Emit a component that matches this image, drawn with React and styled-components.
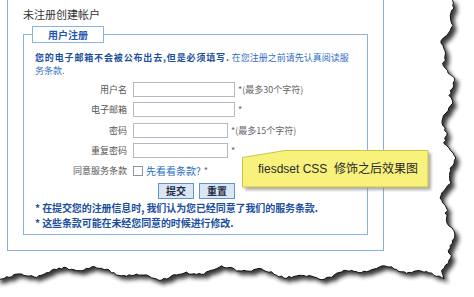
import React from 'react';
import styled, { createGlobalStyle } from 'styled-components';

const GlobalStyle = createGlobalStyle`
  html, body {
    margin: 0;
    padding: 0;
    background: #ffffff;
  }
  body {
    width: 474px;
    height: 297px;
    overflow: hidden;
    font-family: "Noto Sans CJK SC", "Liberation Sans", sans-serif;
  }
`;

const Page = styled.div`
  position: relative;
  width: 474px;
  height: 297px;
  overflow: hidden;
`;

const OuterBox = styled.div`
  margin-left: 7px;
  width: 377px;
  box-sizing: border-box;
  border: 1px solid #86afdf;
  border-top: none;
  padding: 7px 15px 15px 15px;
`;

const Title = styled.div`
  font-size: 11px;
  line-height: 14px;
  color: #333;
  margin-bottom: 5px;
`;

const FieldSet = styled.fieldset`
  margin: 0;
  width: 345px;
  box-sizing: border-box;
  border: 1px solid #86b3e3;
  padding: 0 10px 4px 11px;
`;

const Legend = styled.legend`
  margin-left: -3px;
  width: 72px;
  height: 17px;
  box-sizing: border-box;
  padding: 0;
  border: 1px solid #86b3e3;
  display: flex;
  align-items: center;
  justify-content: center;
  font-size: 10px;
  line-height: 15px;
  font-weight: bold;
  color: #1c56b0;
`;

const Intro = styled.p`
  margin: 8px 0 0 0;
  width: 318px;
  font-size: 9px;
  line-height: 13px;
  color: #2f6dc4;
`;

const Strong = styled.b`
  color: #1b4f9e;
  letter-spacing: 0.85px;
`;

const FormGrid = styled.div`
  margin-top: 5px;
  display: grid;
  grid-template-columns: 92px 1fr;
  grid-auto-rows: 15px;
  column-gap: 6px;
  row-gap: 5.3px;
`;

const Label = styled.label`
  text-align: right;
  font-size: 9px;
  line-height: 15px;
  color: #555;
  white-space: nowrap;
`;

const Cell = styled.div`
  display: flex;
  align-items: center;
  gap: ${(p) => p.$gap || 3}px;
  justify-content: ${(p) => p.$justify || 'flex-start'};
  width: ${(p) => (p.$width ? p.$width + 'px' : 'auto')};
`;

const TextInput = styled.input`
  width: ${(p) => p.$w}px;
  height: 15px;
  box-sizing: border-box;
  margin: 0;
  padding: 0 2px;
  border: 1px solid #b3bac6;
  background: #fff;
  font-size: 9px;
`;

const Hint = styled.span`
  font-size: 9px;
  line-height: 15px;
  color: #666;
  white-space: nowrap;
`;

const CheckBox = styled.span`
  display: inline-block;
  width: 10px;
  height: 10px;
  box-sizing: border-box;
  border: 1px solid #8b93a0;
  background: #fff;
`;

const TermsLink = styled.a`
  font-size: 10px;
  line-height: 15px;
  color: #2a6ac8;
  text-decoration: none;
`;

const Button = styled.button`
  width: 36px;
  height: 16px;
  margin: 0;
  padding: 0;
  box-sizing: border-box;
  border: 1px solid #5f93d6;
  background: #dbe6f3;
  font-family: inherit;
  font-size: 10px;
  line-height: 14px;
  font-weight: bold;
  color: #1d2b45;
`;

const Notes = styled.div`
  margin-top: 2px;
  font-size: 10px;
  line-height: 15px;
  font-weight: bold;
  color: #1b4f9e;
  letter-spacing: -0.1px;
`;

const Callout = styled.div`
  position: absolute;
  left: 242px;
  top: 150px;
  width: 194px;
  height: 44px;
`;

const CalloutText = styled.span`
  position: absolute;
  left: 16px;
  top: 11px;
  font-family: "Liberation Sans", "Noto Sans CJK SC", sans-serif;
  font-size: 12px;
  line-height: 16px;
  color: #2a2a2a;
  white-space: nowrap;
`;

const Overlay = styled.svg`
  position: absolute;
  left: 0;
  top: 0;
  pointer-events: none;
`;

function rng(seed) {
  let s = seed;
  return () => {
    s = (s * 16807) % 2147483647;
    return (s - 1) / 2147483646;
  };
}

function tearPoints() {
  const r = rng(11);
  const pts = [];
  for (let y = -2; y <= 272; y += 2.5) {
    const x =
      448 + 5 * Math.sin(y / 12 + 0.5) + 2.5 * Math.sin(y / 4.1 + 1) + (r() - 0.5) * 2.6;
    pts.push([x, y]);
  }
  for (let x = 444; x >= -4; x -= 2.5) {
    const y =
      273 + 4.5 * Math.sin(x / 24 + 1.3) + 2.2 * Math.sin(x / 6.5 + 2) + (r() - 0.5) * 2.2;
    pts.push([x, y]);
  }
  return pts;
}

function TornEdge() {
  const pts = tearPoints();
  const line = pts.map((p, i) => `${i ? 'L' : 'M'}${p[0].toFixed(1)} ${p[1].toFixed(1)}`).join(' ');
  const paper = `M-5 -5 ${line.replace('M', 'L')} L-5 -5 Z`;
  const outside = `M-10 -10 H490 V310 H-10 Z ${paper}`;
  return (
    <Overlay width="474" height="297" viewBox="0 0 474 297">
      <defs>
        <filter id="tearBlur" x="-10%" y="-10%" width="120%" height="120%">
          <feGaussianBlur stdDeviation="2" />
        </filter>
        <clipPath id="outsideClip">
          <path d={outside} clipRule="evenodd" />
        </clipPath>
      </defs>
      <path d={outside} fill="#fff" fillRule="evenodd" />
      <g clipPath="url(#outsideClip)">
        <path d={paper} transform="translate(4 4)" fill="#222" opacity="0.9" filter="url(#tearBlur)" />
      </g>
      <path d={line} fill="none" stroke="#111" strokeWidth="1" />
    </Overlay>
  );
}

function CalloutShape() {
  return (
    <Overlay width="194" height="44" viewBox="0 0 194 44">
      <defs>
        <filter id="noteShadow" x="-10%" y="-20%" width="130%" height="160%">
          <feGaussianBlur stdDeviation="1.6" />
        </filter>
      </defs>
      <polygon points="3,10 46,3 189,3 189,40 3,40" fill="#777" opacity="0.6" filter="url(#noteShadow)" />
      <polygon points="0.5,7.5 43,0.5 186,0.5 186,37 0.5,37" fill="#f8f27c" stroke="#cfc24a" strokeWidth="1" />
    </Overlay>
  );
}

export default function App() {
  return (
    <Page>
      <GlobalStyle />
      <OuterBox>
        <Title>未注册创建帐户</Title>
        <FieldSet>
          <Legend>用户注册</Legend>
          <Intro>
            <Strong>您的电子邮箱不会被公布出去,但是必须填写.</Strong> 在您注册之前请先认真阅读服务条款.
          </Intro>
          <FormGrid>
            <Label>用户名</Label>
            <Cell>
              <TextInput $w={102} />
              <Hint>*(最多30个字符)</Hint>
            </Cell>
            <Label>电子邮箱</Label>
            <Cell>
              <TextInput $w={102} />
              <Hint>*</Hint>
            </Cell>
            <Label>密码</Label>
            <Cell>
              <TextInput $w={95} />
              <Hint>*(最多15个字符)</Hint>
            </Cell>
            <Label>重复密码</Label>
            <Cell>
              <TextInput $w={95} />
              <Hint>*</Hint>
            </Cell>
            <Label>同意服务条款</Label>
            <Cell>
              <CheckBox />
              <TermsLink href="#">先看看条款?</TermsLink>
              <Hint>*</Hint>
            </Cell>
            <span />
            <Cell $width={102} $justify="flex-end" $gap={5}>
              <Button>提交</Button>
              <Button>重置</Button>
            </Cell>
          </FormGrid>
          <Notes>
            <div>* 在提交您的注册信息时, 我们认为您已经同意了我们的服务条款.</div>
            <div>* 这些条款可能在未经您同意的时候进行修改.</div>
          </Notes>
        </FieldSet>
      </OuterBox>
      <Callout>
        <CalloutShape />
        <CalloutText>fiesdset CSS&nbsp; 修饰之后效果图</CalloutText>
      </Callout>
      <TornEdge />
    </Page>
  );
}
